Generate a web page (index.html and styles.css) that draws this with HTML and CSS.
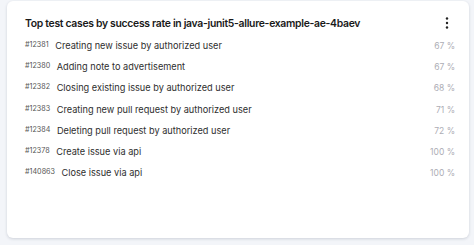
FILE: index.html
```html
<!DOCTYPE html>
<html>
<head>
<meta charset="utf-8">
<link rel="stylesheet" href="styles.css">
</head>
<body>
<div class="card">
  <div class="header">
    <h1 class="title">Top test cases by success rate in java-junit5-allure-example-ae-4baev</h1>
    <button class="menu" aria-label="menu">
      <svg width="4" height="12" viewBox="0 0 4 12"><circle cx="2" cy="1.5" r="1.2" fill="#222"/><circle cx="2" cy="6" r="1.2" fill="#222"/><circle cx="2" cy="10.5" r="1.2" fill="#222"/></svg>
    </button>
  </div>
  <ul class="list">
    <li class="row"><span class="id">#12381</span><span class="name">Creating new issue by authorized user</span><span class="pct">67 %</span></li>
    <li class="row"><span class="id">#12380</span><span class="name">Adding note to advertisement</span><span class="pct">67 %</span></li>
    <li class="row"><span class="id">#12382</span><span class="name">Closing existing issue by authorized user</span><span class="pct">68 %</span></li>
    <li class="row"><span class="id">#12383</span><span class="name">Creating new pull request by authorized user</span><span class="pct">71 %</span></li>
    <li class="row"><span class="id">#12384</span><span class="name">Deleting pull request by authorized user</span><span class="pct">72 %</span></li>
    <li class="row"><span class="id">#12378</span><span class="name">Create issue via api</span><span class="pct">100 %</span></li>
    <li class="row"><span class="id">#140863</span><span class="name">Close issue via api</span><span class="pct">100 %</span></li>
  </ul>
</div>
</body>
</html>
```

FILE: styles.css
```css
html, body {
  margin: 0;
  padding: 0;
  background: #f3f5f9;
  font-family: Inter, "Noto Sans", sans-serif;
}
body {
  padding: 1px 5px 0 7px;
  width: 474px;
  height: 245px;
  box-sizing: border-box;
}
.card {
  background: #fff;
  border-radius: 6px;
  box-shadow: 0 1px 3px rgba(40, 50, 80, 0.18);
  width: 462px;
  height: 237px;
  box-sizing: border-box;
  padding: 12px 14px 0 18px;
}
.header {
  display: flex;
  align-items: center;
  justify-content: space-between;
  height: 20px;
}
.title {
  margin: 0;
  font-size: 10.4px;
  font-weight: 600;
  color: #1a1a1a;
  letter-spacing: -0.3px;
  white-space: nowrap;
}
.menu {
  border: 0;
  background: none;
  padding: 0;
  margin-right: 6px;
  display: flex;
}
.list {
  list-style: none;
  margin: 2px 0 0;
  padding: 0;
}
.row {
  display: flex;
  align-items: baseline;
  height: 21.2px;
  line-height: 21px;
}
.id {
  font-size: 7.2px;
  color: #555;
  margin-right: 6.5px;
  position: relative;
  top: -2px;
}
.name {
  font-size: 9.2px;
  color: #2e2e2e;
  flex: 1;
}
.pct {
  font-size: 8.5px;
  color: #adadb5;
}
```
